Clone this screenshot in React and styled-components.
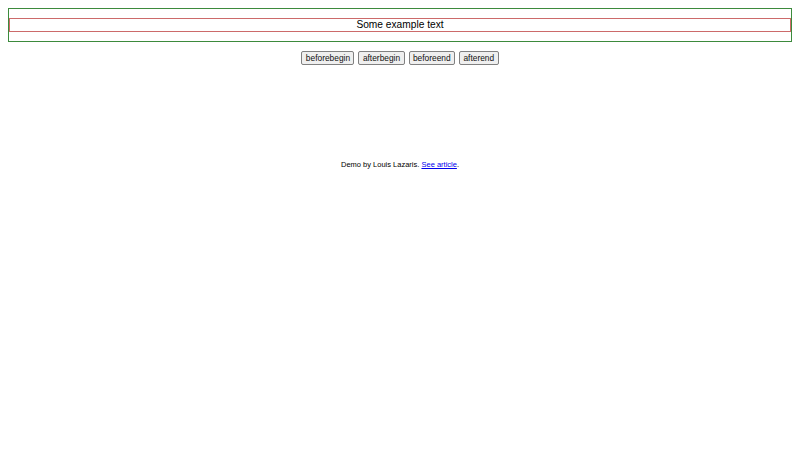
import React from "react";
import styled, { createGlobalStyle } from "styled-components";

const GlobalStyle = createGlobalStyle`
    body {
        margin: 8px;
        background: #fff;
        font-family: "Liberation Sans", Arial, sans-serif;
        color: #000;
    }
`;

const Outer = styled.div`
    border: 1px solid #3d8a3d;
    padding: 9px 0;
`;

const Inner = styled.div`
    border: 1px solid #cc6a6a;
    text-align: center;
    font-size: 10.2px;
    line-height: 12px;
`;

const Controls = styled.div`
    margin-top: 9px;
    display: flex;
    justify-content: center;
    gap: 4px;
`;

const Button = styled.button`
    font-family: "Liberation Sans", Arial, sans-serif;
    font-size: 8.4px;
    line-height: 10px;
    height: 14px;
    padding: 0 3.4px;
    margin: 0;
    background: #efefef;
    border: 1px solid #808080;
    border-radius: 2px;
    color: #111;
`;

const Credit = styled.p`
    margin: 95px 0 0;
    text-align: center;
    font-size: 7.5px;
    line-height: 9px;

    a {
        color: #0000ee;
    }
`;

const positions = ["beforebegin", "afterbegin", "beforeend", "afterend"];

const App = () => (
    <>
        <GlobalStyle />
        <Outer>
            <Inner>Some example text</Inner>
        </Outer>
        <Controls>
            {positions.map(pos => (
                <Button key={pos}>{pos}</Button>
            ))}
        </Controls>
        <Credit>
            Demo by Louis Lazaris. <a href="#article">See article</a>.
        </Credit>
    </>
);

export default App;
